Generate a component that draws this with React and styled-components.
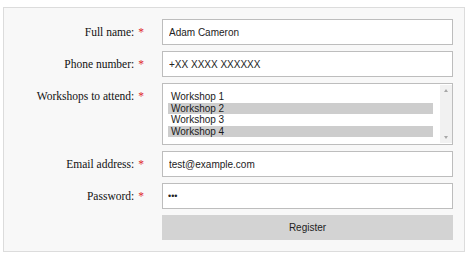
import React from "react";
import styled, { createGlobalStyle } from "styled-components";

const GlobalStyle = createGlobalStyle`
  html, body {
    margin: 0;
    padding: 0;
    background: #ffffff;
  }
  body {
    padding: 7px 0 0 3px;
  }
`;

const Panel = styled.form`
  width: 462px;
  box-sizing: border-box;
  background: #f8f8f8;
  border: 1px solid #dcdcdc;
  padding: 11px 11px 11px 0;
  display: grid;
  grid-template-columns: 140px 291px;
  column-gap: 18px;
  row-gap: 6px;
`;

const Label = styled.label`
  align-self: start;
  text-align: right;
  font-family: "Liberation Serif", "Times New Roman", serif;
  font-size: 11.5px;
  line-height: 26px;
  color: #111;
  white-space: nowrap;
`;

const Required = styled.span`
  color: #e0262b;
  margin-left: 4px;
`;

const TextInput = styled.input`
  box-sizing: border-box;
  width: 100%;
  height: 26px;
  margin: 0;
  padding: 0 6px;
  border: 1px solid #bdbdbd;
  border-radius: 0;
  background: #fff;
  font-family: "Liberation Sans", Arial, sans-serif;
  font-size: 10px;
  color: #222;
  outline: none;
  &[type="password"] {
    font-size: 9px;
    padding-left: 5px;
  }
`;

const ListBox = styled.div`
  box-sizing: border-box;
  height: 62px;
  border: 1px solid #bdbdbd;
  background: #fff;
  display: flex;
`;

const Options = styled.div`
  flex: 1;
  padding: 7px 7px 0 5px;
  display: flex;
  flex-direction: column;
`;

const Option = styled.div`
  height: 11.5px;
  line-height: 11.5px;
  padding-left: 3px;
  font-family: "Liberation Sans", Arial, sans-serif;
  font-size: 10px;
  color: #1a1a1a;
  background: ${(p) => (p.selected ? "#cdcdcd" : "transparent")};
`;

const ScrollBar = styled.div`
  width: 12px;
  margin: 1px 0;
  background: #f1f1f1;
  display: flex;
  flex-direction: column;
  justify-content: space-between;
  align-items: center;
  padding: 4px 0;
  box-sizing: border-box;
`;

const Arrow = styled.span`
  width: 0;
  height: 0;
  border-left: 2.5px solid transparent;
  border-right: 2.5px solid transparent;
  ${(p) =>
    p.down
      ? "border-top: 3px solid #a8a8a8;"
      : "border-bottom: 3px solid #a8a8a8;"}
`;

const Button = styled.button`
  grid-column: 2;
  height: 25px;
  margin: 0;
  border: none;
  border-radius: 0;
  background: #d3d3d3;
  font-family: "Liberation Sans", Arial, sans-serif;
  font-size: 10px;
  color: #222;
  cursor: pointer;
`;

const workshops = [
  { name: "Workshop 1", selected: false },
  { name: "Workshop 2", selected: true },
  { name: "Workshop 3", selected: false },
  { name: "Workshop 4", selected: true },
];

const Field = ({ id, label, type = "text", value }) => (
  <>
    <Label htmlFor={id}>
      {label}
      <Required>*</Required>
    </Label>
    <TextInput id={id} type={type} defaultValue={value} />
  </>
);

const App = () => {
  return (
    <>
      <GlobalStyle />
      <Panel onSubmit={(e) => e.preventDefault()}>
        <Field id="name" label="Full name:" value="Adam Cameron" />
        <Field id="phone" label="Phone number:" type="tel" value="+XX XXXX XXXXXX" />
        <Label htmlFor="workshops">
          Workshops to attend:
          <Required>*</Required>
        </Label>
        <ListBox id="workshops" role="listbox" aria-multiselectable="true">
          <Options>
            {workshops.map((w) => (
              <Option key={w.name} role="option" aria-selected={w.selected} selected={w.selected}>
                {w.name}
              </Option>
            ))}
          </Options>
          <ScrollBar>
            <Arrow />
            <Arrow down />
          </ScrollBar>
        </ListBox>
        <Field id="email" label="Email address:" type="email" value="test@example.com" />
        <Field id="password" label="Password:" type="password" value="abc" />
        <Button type="submit">Register</Button>
      </Panel>
    </>
  );
};

export default App;
